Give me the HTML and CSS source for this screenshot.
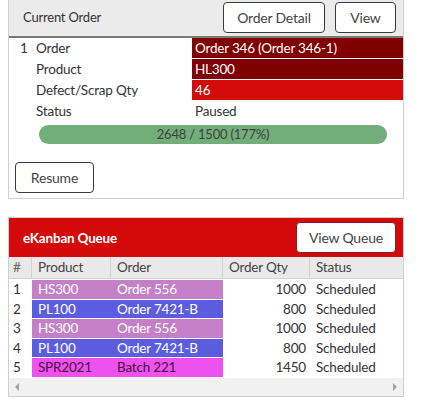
FILE: index.html
```html
<!DOCTYPE html>
<html>
<head>
<meta charset="utf-8">
<link rel="stylesheet" href="styles.css">
</head>
<body>
<div class="page">
  <section class="card">
    <div class="card-head">
      <span class="card-title">Current Order</span>
      <div class="head-actions">
        <button class="btn btn-detail">Order Detail</button>
        <button class="btn btn-view">View</button>
      </div>
    </div>
    <div class="details">
      <div class="num">1</div><div class="label">Order</div><div class="val maroon">Order 346 (Order 346-1)</div>
      <div class="num"></div><div class="label">Product</div><div class="val maroon">HL300</div>
      <div class="num"></div><div class="label">Defect/Scrap Qty</div><div class="val red">46</div>
      <div class="num"></div><div class="label">Status</div><div class="val plain">Paused</div>
    </div>
    <div class="progress-wrap">
      <div class="progress">2648 / 1500 (177%)</div>
    </div>
    <div class="card-foot">
      <button class="btn btn-resume">Resume</button>
    </div>
  </section>

  <section class="card card-queue">
    <div class="queue-head">
      <span class="queue-title">eKanban Queue</span>
      <button class="btn btn-queue">View Queue</button>
    </div>
    <div class="table">
      <div class="th c-num">#</div><div class="th">Product</div><div class="th">Order</div><div class="th">Order Qty</div><div class="th th-last">Status</div>

      <div class="td c-num">1</div><div class="td hs">HS300</div><div class="td hs">Order 556</div><div class="td qty">1000</div><div class="td">Scheduled</div>
      <div class="td c-num">2</div><div class="td pl">PL100</div><div class="td pl">Order 7421-B</div><div class="td qty">800</div><div class="td">Scheduled</div>
      <div class="td c-num">3</div><div class="td hs">HS300</div><div class="td hs">Order 556</div><div class="td qty">1000</div><div class="td">Scheduled</div>
      <div class="td c-num">4</div><div class="td pl">PL100</div><div class="td pl">Order 7421-B</div><div class="td qty">800</div><div class="td">Scheduled</div>
      <div class="td c-num">5</div><div class="td spr">SPR2021</div><div class="td spr">Batch 221</div><div class="td qty">1450</div><div class="td">Scheduled</div>
    </div>
    <div class="hscroll">
      <span class="arrow arrow-left"></span>
      <span class="arrow arrow-right"></span>
    </div>
  </section>
</div>
</body>
</html>
```

FILE: styles.css
```css
* { box-sizing: border-box; }

html, body {
  margin: 0;
  padding: 0;
  background: #ffffff;
}

body {
  font-family: "Lato", "Liberation Sans", sans-serif;
  font-size: 13.5px;
  letter-spacing: -0.2px;
  color: #333333;
}

.page {
  padding: 0 0 0 8px;
  width: 404px;
  display: flex;
  flex-direction: column;
  gap: 18px;
}

.card {
  width: 396px;
  border: 1px solid #cfcfcf;
  border-top: none;
  background: #ffffff;
}

.card-head {
  height: 38px;
  background: #ebebeb;
  border-bottom: 2px solid #7a7a7a;
  display: flex;
  align-items: flex-start;
  justify-content: space-between;
  padding: 2px 7px 0 14px;
}

.card-title {
  font-size: 13px;
  line-height: 31px;
  color: #333333;
}

.head-actions {
  display: flex;
  gap: 10px;
}

.btn {
  font-family: inherit;
  font-size: 14px;
  letter-spacing: -0.2px;
  color: #444444;
  background: #ffffff;
  border: 1px solid #3a3a3a;
  border-radius: 4px;
  height: 31px;
  padding: 0;
  cursor: pointer;
}

.btn-detail { width: 102px; }
.btn-view { width: 61px; }

.details {
  display: grid;
  grid-template-columns: 27px 156px 1fr;
  grid-auto-rows: 20px;
  row-gap: 1px;
}

.num {
  padding-left: 11px;
  line-height: 20px;
}

.label {
  line-height: 20px;
}

.val {
  line-height: 20px;
  padding-left: 3px;
  color: #ffffff;
  white-space: nowrap;
}

.maroon { background: #800000; }
.red { background: #d40b0b; }
.val.plain { color: #333333; }

.progress-wrap {
  padding: 4px 16px 0 30px;
}

.progress {
  height: 19px;
  border-radius: 10px;
  background: #72ae79;
  text-align: center;
  font-size: 13px;
  line-height: 19px;
  color: #3f3f3f;
}

.card-foot {
  padding: 18px 0 5px 6px;
}

.btn-resume {
  width: 79px;
}

.card-queue {
  border-top: 1px solid #cfcfcf;
}

.queue-head {
  height: 39px;
  background: #d40a0a;
  display: flex;
  align-items: center;
  justify-content: space-between;
  padding: 0 7px 0 14px;
}

.queue-title {
  color: #ffffff;
  font-weight: bold;
  font-size: 13.5px;
}

.btn-queue {
  width: 100px;
  border-color: #7a2020;
}

.table {
  display: grid;
  grid-template-columns: 23px 79px 112px 87px 1fr;
  grid-template-rows: 22px;
  grid-auto-rows: 18.5px;
  row-gap: 1px;
  background: #ffffff;
}

.th {
  background: #e9e9e9;
  height: 22px;
  line-height: 21px;
  padding-left: 6px;
  border-right: 1px solid #d2d2d2;
  border-bottom: 1px solid #d2d2d2;
  color: #444444;
}

.th.c-num { padding-left: 4px; color: #666666; }
.th.th-last { border-right: none; }

.td {
  line-height: 19px;
  padding-left: 6px;
  white-space: nowrap;
}

.td.c-num { padding-left: 4px; }

.td.qty {
  text-align: right;
  padding-right: 4px;
  padding-left: 0;
}

.hs { background: #c47fc8; color: #ffffff; }
.pl { background: #5c5ce0; color: #ffffff; }
.spr { background: #ee52ee; color: #4a1040; }

.hscroll {
  height: 18px;
  background: #f1f1f1;
  position: relative;
  margin-top: 1px;
}

.arrow {
  position: absolute;
  top: 5px;
  width: 0;
  height: 0;
  border-top: 4px solid transparent;
  border-bottom: 4px solid transparent;
}

.arrow-left {
  left: 6px;
  border-right: 4px solid #a3a3a3;
}

.arrow-right {
  right: 6px;
  border-left: 4px solid #a3a3a3;
}
```
